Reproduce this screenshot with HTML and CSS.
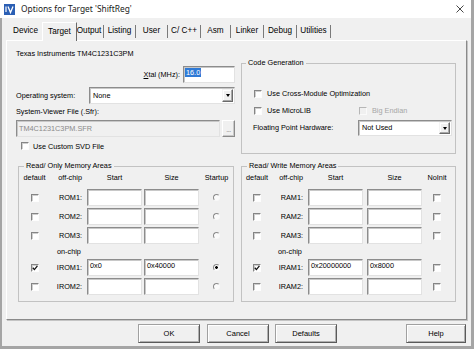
FILE: index.html
```html
<!DOCTYPE html>
<html>
<head>
<meta charset="utf-8">
<title>Options for Target 'ShiftReg'</title>
<link rel="stylesheet" href="styles.css">
</head>
<body>
<div class="window">
  <div class="titlebar">
    <svg class="app-icon" viewBox="0 0 11 11" width="11" height="11">
      <rect x="0" y="0" width="11" height="11" fill="#2b5fb4"/>
      <path d="M2 2.5 L2 8" stroke="#fff" stroke-width="1.2" fill="none"/>
      <path d="M4 2.5 L6.5 8.5 L9 2.5" stroke="#fff" stroke-width="1.3" fill="none"/>
    </svg>
    <span class="title">Options for Target 'ShiftReg'</span>
    <svg class="close" viewBox="0 0 8 8" width="8" height="8">
      <path d="M0.5 0.5 L7.5 7.5 M7.5 0.5 L0.5 7.5" stroke="#333" stroke-width="0.9"/>
    </svg>
  </div>
  <div class="frame">
    <div class="tabs">
      <div class="tab">Device</div>
      <div class="tab selected">Target</div>
      <div class="tab">Output</div>
      <div class="tab">Listing</div>
      <div class="tab">User</div>
      <div class="tab">C/ C++</div>
      <div class="tab">Asm</div>
      <div class="tab">Linker</div>
      <div class="tab">Debug</div>
      <div class="tab">Utilities</div>
    </div>
    <div class="page">
      <div class="top">
        <div class="col-left">
          <div class="device">Texas Instruments TM4C1231C3PM</div>
          <div class="xtal-row">
            <span><u>X</u>tal (MHz):</span>
            <div class="input xtal"><span class="hl">16.0</span></div>
          </div>
          <div class="os-row">
            <span>Operating system:</span>
            <div class="input select os"><span class="sel-text">None</span><span class="drop"><span class="tri"></span></span></div>
          </div>
          <div class="svf-label">System-Viewer File (.Sfr):</div>
          <div class="svf-row">
            <div class="input disabled">TM4C1231C3PM.SFR</div>
            <div class="dots">...</div>
          </div>
          <div class="check-row">
            <span class="cb"></span><span>Use Custom SVD File</span>
          </div>
        </div>
        <fieldset class="group codegen">
          <legend>Code Generation</legend>
          <div class="cg-grid">
            <div class="cg-row span2"><span class="cb"></span><span>Use Cross-Module Optimization</span></div>
            <div class="cg-row r2"><span class="cb"></span><span>Use MicroLIB</span></div>
            <div class="cg-row r2 endian"><span class="cb dis"></span><span class="dis-text">Big Endian</span></div>
            <div class="fph-label">Floating Point Hardware:</div>
            <div class="input select fph"><span class="sel-text">Not Used</span><span class="drop"><span class="tri"></span></span></div>
          </div>
        </fieldset>
      </div>
      <div class="mem">
        <fieldset class="group memgroup ro">
          <legend>Read/ Only Memory Areas</legend>
          <div class="mem-grid">
            <span class="hd c-def">default</span>
            <span class="hd c-lbl">off-chip</span>
            <span class="hd c-in">Start</span>
            <span class="hd c-in">Size</span>
            <span class="hd c-end">Startup</span>

            <span class="c-def"><span class="cb"></span></span>
            <span class="c-lbl">ROM1:</span>
            <span class="input cell"></span>
            <span class="input cell"></span>
            <span class="c-end"><span class="radio"></span></span>

            <span class="c-def"><span class="cb"></span></span>
            <span class="c-lbl">ROM2:</span>
            <span class="input cell"></span>
            <span class="input cell"></span>
            <span class="c-end"><span class="radio"></span></span>

            <span class="c-def"><span class="cb"></span></span>
            <span class="c-lbl">ROM3:</span>
            <span class="input cell"></span>
            <span class="input cell"></span>
            <span class="c-end"><span class="radio"></span></span>

            <span class="onchip">on-chip</span>

            <span class="c-def"><span class="cb"><svg viewBox="0 0 6 6" width="6" height="6"><path d="M0.8 2.8 L2.4 4.6 L5.4 0.9" stroke="#111" stroke-width="1.3" fill="none"/></svg></span></span>
            <span class="c-lbl">IROM1:</span>
            <span class="input cell">0x0</span>
            <span class="input cell">0x40000</span>
            <span class="c-end"><span class="radio on"></span></span>

            <span class="c-def"><span class="cb"></span></span>
            <span class="c-lbl">IROM2:</span>
            <span class="input cell"></span>
            <span class="input cell"></span>
            <span class="c-end"><span class="radio"></span></span>
          </div>
        </fieldset>
        <fieldset class="group memgroup rw">
          <legend>Read/ Write Memory Areas</legend>
          <div class="mem-grid">
            <span class="hd c-def">default</span>
            <span class="hd c-lbl">off-chip</span>
            <span class="hd c-in">Start</span>
            <span class="hd c-in">Size</span>
            <span class="hd c-end">NoInit</span>

            <span class="c-def"><span class="cb"></span></span>
            <span class="c-lbl">RAM1:</span>
            <span class="input cell"></span>
            <span class="input cell"></span>
            <span class="c-end"><span class="cb"></span></span>

            <span class="c-def"><span class="cb"></span></span>
            <span class="c-lbl">RAM2:</span>
            <span class="input cell"></span>
            <span class="input cell"></span>
            <span class="c-end"><span class="cb"></span></span>

            <span class="c-def"><span class="cb"></span></span>
            <span class="c-lbl">RAM3:</span>
            <span class="input cell"></span>
            <span class="input cell"></span>
            <span class="c-end"><span class="cb"></span></span>

            <span class="onchip">on-chip</span>

            <span class="c-def"><span class="cb"><svg viewBox="0 0 6 6" width="6" height="6"><path d="M0.8 2.8 L2.4 4.6 L5.4 0.9" stroke="#111" stroke-width="1.3" fill="none"/></svg></span></span>
            <span class="c-lbl">IRAM1:</span>
            <span class="input cell">0x20000000</span>
            <span class="input cell">0x8000</span>
            <span class="c-end"><span class="cb"></span></span>

            <span class="c-def"><span class="cb"></span></span>
            <span class="c-lbl">IRAM2:</span>
            <span class="input cell"></span>
            <span class="input cell"></span>
            <span class="c-end"><span class="cb"></span></span>
          </div>
        </fieldset>
      </div>
    </div>
    <div class="buttons">
      <div class="btn ok">OK</div>
      <div class="btn cancel">Cancel</div>
      <div class="btn defaults">Defaults</div>
      <div class="btn help">Help</div>
    </div>
  </div>
</div>
</body>
</html>
```
FILE: styles.css
```css
* { box-sizing: border-box; }
html, body { margin: 0; padding: 0; }
body {
  width: 474px;
  height: 349px;
  overflow: hidden;
  background: #fff;
  font-family: "Liberation Sans", Arial, sans-serif;
  font-size: 7.3px;
  color: #000;
}
.window {
  width: 474px;
  height: 349px;
  display: flex;
  flex-direction: column;
  border-right: 3px solid #a5a5a5;
}
.titlebar {
  height: 18px;
  flex: none;
  background: #fff;
  display: flex;
  align-items: center;
  padding-left: 4px;
}
.app-icon { flex: none; margin-right: 6px; }
.title {
  flex: 1;
  font-family: "Noto Sans", "Liberation Sans", sans-serif;
  font-size: 8.4px;
  color: #1a1a1a;
  line-height: 12px;
}
.close { flex: none; margin-right: 7px; }

.frame {
  flex: 1;
  background: #f0f0f0;
  border-left: 2px solid #a5a5a5;
  border-bottom: 3px solid #a5a5a5;
  padding: 4px 4px 0 4px;
  display: flex;
  flex-direction: column;
}

/* tabs */
.tabs {
  height: 18px;
  flex: none;
  display: grid;
  grid-template-columns: 36px 31px 29px 32px 32px 33px 30px 33px 33px 34px;
  align-items: end;
  padding-left: 2px;
  font-size: 8.2px;
}
.tab {
  height: 13px;
  margin-bottom: 2px;
  line-height: 12px;
  text-align: center;
  border-right: 1px solid #7a7a7a;
  white-space: nowrap;
}
.tab.selected {
  position: relative;
  z-index: 1;
  height: 19px;
  margin: 0 -2px -1px -2px;
  padding-top: 3px;
  background: #f0f0f0;
  border-top: 1px solid #fff;
  border-left: 1px solid #fff;
  border-right: 1px solid #6a6a6a;
  line-height: 12px;
}

/* page */
.page {
  flex: none;
  background: #f0f0f0;
  border-top: 1px solid #fff;
  border-left: 1px solid #fff;
  border-right: 1px solid #8a8a8a;
  border-bottom: 1px solid #8a8a8a;
  box-shadow: 1px 1px 0 #c4c4c4;
  padding: 8px 10px 17px 9px;
}
.top {
  display: grid;
  grid-template-columns: 219px 215px;
  column-gap: 6px;
  align-items: start;
  height: 105px;
}
.col-left { display: flex; flex-direction: column; }
.device { height: 10px; line-height: 10px; }
.xtal-row {
  margin-top: 7px;
  height: 17px;
  display: flex;
  justify-content: flex-end;
  align-items: center;
  gap: 3px;
}
.input {
  background: #fff;
  border-style: solid;
  border-width: 1px;
  border-color: #8c8c8c #e2e2e2 #e2e2e2 #8c8c8c;
  box-shadow: inset 1px 1px 0 #c8c8c8;
}
.xtal { width: 52px; height: 17px; padding: 1px 0 0 1px; line-height: 10px; }
.hl { display: inline-block; background: #2f7ad6; color: #fff; padding: 0 1px; line-height: 9px; }
.os-row {
  margin-top: 4px;
  height: 17px;
  display: flex;
  justify-content: space-between;
  align-items: center;
}
.select { display: flex; align-items: center; }
.os { width: 146px; height: 17px; }
.sel-text { flex: 1; padding-left: 3px; line-height: 10px; }
.drop {
  flex: none;
  width: 11px;
  align-self: stretch;
  margin: 1px 1px 1px 0;
  background: #f0f0f0;
  border-style: solid;
  border-width: 1px;
  border-color: #f4f4f4 #6a6a6a #6a6a6a #f4f4f4;
  box-shadow: inset -1px -1px 0 #a8a8a8, inset 1px 1px 0 #fff;
  display: flex;
  align-items: center;
  justify-content: center;
}
.tri {
  width: 0;
  height: 0;
  border-left: 2.5px solid transparent;
  border-right: 2.5px solid transparent;
  border-top: 3px solid #000;
}
.svf-label { margin-top: 3px; height: 10px; line-height: 10px; }
.svf-row { margin-top: 3px; height: 17px; display: flex; gap: 2px; }
.input.disabled {
  width: 204px;
  background: #f0f0f0;
  color: #8a8a8a;
  padding-left: 2px;
  line-height: 15px;
}
.dots {
  width: 13px;
  background: #f0f0f0;
  border-style: solid;
  border-width: 1px;
  border-color: #fff #8a8a8a #8a8a8a #fff;
  box-shadow: inset -1px -1px 0 #c8c8c8;
  color: #7a7a7a;
  font-size: 7px;
  line-height: 18px;
  text-align: center;
  letter-spacing: -0.5px;
}
.check-row {
  margin-top: 4px;
  height: 10px;
  display: flex;
  align-items: center;
  gap: 4px;
  padding-left: 5px;
}

/* checkbox & radio */
.cb {
  flex: none;
  display: inline-flex;
  align-items: center;
  justify-content: center;
  width: 8px;
  height: 8px;
  background: #fff;
  border-style: solid;
  border-width: 1px;
  border-color: #858585 #fdfdfd #fdfdfd #858585;
  box-shadow: inset 1px 1px 0 #cfcfcf;
}
.cb svg { display: block; }
.cb.dis { background: #f0f0f0; border-color: #b6b6b6 #fafafa #fafafa #b6b6b6; box-shadow: none; }
.dis-text { color: #a6a6a6; }
.radio {
  display: inline-block;
  width: 7px;
  height: 7px;
  border-radius: 50%;
  border: 1px solid;
  border-color: #8a8a8a #f8f8f8 #f8f8f8 #8a8a8a;
  background: #fbfbfb;
}
.radio.on { background: radial-gradient(circle, #000 0 1.1px, #fbfbfb 1.6px); }

/* groups */
.group {
  margin: 0;
  min-width: 0;
  border: 1px solid #c2c2c2;
}
.group legend {
  padding: 0 2px;
  line-height: 10px;
  height: 10px;
}
.codegen {
  margin-top: 9px;
  padding: 21px 3px 17px 12px;
}
.codegen legend { margin-left: -8px; }
.cg-grid {
  display: grid;
  grid-template-columns: 104px 94px;
}
.cg-row { height: 10px; display: flex; align-items: center; gap: 5px; line-height: 10px; }
.span2 { grid-column: 1 / -1; }
.r2 { margin-top: 7px; }
.endian { padding-left: 1px; }
.fph-label { margin-top: 4px; margin-left: -1px; height: 16px; line-height: 16px; }
.fph { margin-top: 4px; height: 16px; }

.mem {
  margin-top: 7px;
  margin-left: 2px;
  display: grid;
  grid-template-columns: 216px 215px;
  column-gap: 7px;
}
.memgroup { padding: 1px 0 6px 0; }
.memgroup legend { margin-left: 5px; }
.mem-grid {
  display: grid;
  grid-template-rows: 15px 17px 17px 17px 11px 17px 17px;
  row-gap: 2px;
  align-items: center;
}
.ro .mem-grid { grid-template-columns: 31px 37px 57px 58px 1fr; }
.rw .mem-grid { grid-template-columns: 30px 36px 59px 58px 1fr; }
.hd { align-self: start; line-height: 12px; white-space: nowrap; }
.c-def { display: flex; justify-content: center; }
.hd.c-def { display: block; text-align: center; }
.c-lbl { text-align: right; padding-right: 5px; white-space: nowrap; }
.hd.c-in { width: 55px; text-align: center; }
.c-end { display: flex; justify-content: center; }
.hd.c-end { display: block; text-align: center; }
.ro .c-end { padding-right: 2px; }
.rw .c-end { padding-right: 6px; }
.input.cell {
  display: block;
  width: 55px;
  height: 17px;
  padding: 1px 0 0 2px;
  line-height: 10px;
}
.onchip { grid-column: 1 / -1; line-height: 11px; }
.ro .onchip { padding-left: 38px; }
.rw .onchip { padding-left: 36px; }

/* buttons */
.buttons {
  margin-top: 4px;
  height: 19px;
  flex: none;
  display: flex;
  padding-left: 132px;
  padding-right: 1px;
}
.btn {
  width: 62px;
  height: 19px;
  background: #f0f0f0;
  border-style: solid;
  border-width: 1px;
  border-color: #a0a0a0 #5a5a5a #5a5a5a #a0a0a0;
  box-shadow: inset 1px 1px 0 #fff, inset -1px -1px 0 #b0b0b0;
  display: flex;
  align-items: center;
  justify-content: center;
  font-size: 7.5px;
}
.cancel { margin-left: 7px; }
.defaults { margin-left: 6px; }
.help { margin-left: auto; width: 60px; }
```
